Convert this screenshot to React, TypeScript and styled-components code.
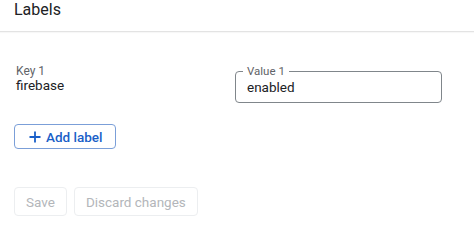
import React from 'react';
import styled, { createGlobalStyle } from 'styled-components';

const GlobalStyle = createGlobalStyle`
  html, body {
    margin: 0;
    padding: 0;
    background: #ffffff;
    font-family: Roboto, "Noto Sans", Arial, sans-serif;
    color: #202124;
  }
`;

const Page = styled.div`
  width: 474px;
  height: 244px;
  overflow: hidden;
`;

const Header = styled.div`
  height: 32px;
  box-sizing: border-box;
  padding-left: 14px;
  border-bottom: 1px solid #e3e3e3;
  box-shadow: 0 1px 1px rgba(0, 0, 0, 0.03);
`;

const Title = styled.h2`
  margin: 0;
  font-size: 16px;
  font-weight: 400;
  line-height: 20px;
  color: #202124;
`;

const Body = styled.div`
  padding: 33px 14px 0 14px;
  display: flex;
  flex-direction: column;
`;

const Row = styled.div`
  display: grid;
  grid-template-columns: 221px 207px;
  align-items: start;
`;

const KeyCell = styled.div`
  padding-left: 2px;
  display: flex;
  flex-direction: column;
`;

const SmallLabel = styled.span`
  font-size: 12px;
  line-height: 12px;
  color: #5f6368;
`;

const KeyValue = styled.span`
  font-size: 13.5px;
  line-height: 16px;
  color: #202124;
`;

const Field = styled.div`
  margin-top: 6px;
  height: 32px;
  box-sizing: border-box;
  padding: 0 11px;
  border: 1px solid #80868b;
  border-radius: 4px;
  position: relative;
  display: flex;
  align-items: center;
`;

const FloatLabel = styled.span`
  position: absolute;
  top: -7px;
  left: 7px;
  padding: 0 4px;
  background: #ffffff;
  font-size: 11.5px;
  line-height: 12px;
  color: #5f6368;
`;

const FieldText = styled.span`
  font-size: 13.5px;
  line-height: 16px;
  color: #202124;
`;

const OutlineButton = styled.button<{ $disabled?: boolean; $height: number }>`
  font-family: inherit;
  height: ${p => p.$height}px;
  box-sizing: border-box;
  display: inline-flex;
  align-items: center;
  gap: 5px;
  padding: ${p => (p.$disabled ? '0 11px' : '0 12px 0 14px')};
  background: #ffffff;
  border-radius: 4px;
  font-size: ${p => (p.$disabled ? 13.5 : 13.5)}px;
  font-weight: ${p => (p.$disabled ? 400 : 500)};
  border: 1px solid ${p => (p.$disabled ? '#eceef0' : '#7b9fd8')};
  color: ${p => (p.$disabled ? '#b3b6ba' : '#1a5fc8')};
  cursor: ${p => (p.$disabled ? 'default' : 'pointer')};
`;

const AddRow = styled.div`
  margin-top: 21px;
  display: flex;
`;

const Actions = styled.div`
  margin-top: 38px;
  display: flex;
  gap: 7px;
`;

const PlusIcon = () => (
  <svg width="12" height="12" viewBox="0 0 12 12">
    <path d="M6 0.5v11M0.5 6h11" stroke="#1a5fc8" strokeWidth="1.8" fill="none" />
  </svg>
);

export default function App() {
  return (
    <Page>
      <GlobalStyle />
      <Header>
        <Title>Labels</Title>
      </Header>
      <Body>
        <Row>
          <KeyCell>
            <SmallLabel>Key 1</SmallLabel>
            <KeyValue>firebase</KeyValue>
          </KeyCell>
          <Field>
            <FloatLabel>Value 1</FloatLabel>
            <FieldText>enabled</FieldText>
          </Field>
        </Row>
        <AddRow>
          <OutlineButton $height={25}>
            <PlusIcon />
            Add label
          </OutlineButton>
        </AddRow>
        <Actions>
          <OutlineButton $disabled $height={29}>
            Save
          </OutlineButton>
          <OutlineButton $disabled $height={29}>
            Discard changes
          </OutlineButton>
        </Actions>
      </Body>
    </Page>
  );
}
